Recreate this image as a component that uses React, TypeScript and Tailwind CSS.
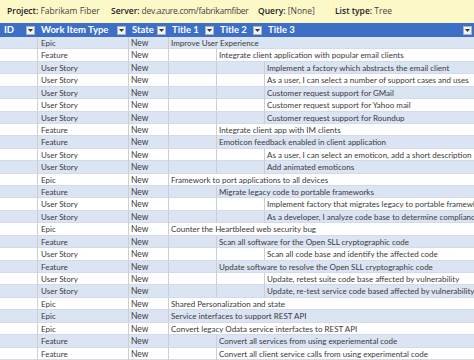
const rows: [string, string][] = [
  ['Epic', 'Improve User Experience'],
  ['Feature', 'Integrate client application with popular email clients'],
  ['User Story', 'Implement a factory which abstracts the email client'],
  ['User Story', 'As a user, I can select a number of support cases and uses'],
  ['User Story', 'Customer request support for GMail'],
  ['User Story', 'Customer request support for Yahoo mail'],
  ['User Story', 'Customer request support for Roundup'],
  ['Feature', 'Integrate client app with IM clients'],
  ['Feature', 'Emoticon feedback enabled in client application'],
  ['User Story', 'As a user, I can select an emoticon, add a short description'],
  ['User Story', 'Add animated emoticons'],
  ['Epic', 'Framework to port applications to all devices'],
  ['Feature', 'Migrate legacy code to portable frameworks'],
  ['User Story', 'Implement factory that migrates legacy to portable framewk'],
  ['User Story', 'As a developer, I analyze code base to determine compliance'],
  ['Epic', 'Counter the Heartbleed web security bug'],
  ['Feature', 'Scan all software for the Open SLL cryptographic code'],
  ['User Story', 'Scan all code base and identify the affected code'],
  ['Feature', 'Update software to resolve the Open SLL cryptographic code'],
  ['User Story', 'Update, retest suite code base affected by vulnerability'],
  ['User Story', 'Update, re-test service code based affected by vulnerability'],
  ['Epic', 'Shared Personalization and state'],
  ['Epic', 'Service interfaces to support REST API'],
  ['Epic', 'Convert legacy Odata service interfactes to REST API'],
  ['Feature', 'Convert all services from using experiemental code'],
  ['Feature', 'Convert all client service calls from using experimental code'],
];

const headers = ['ID', 'Work Item Type', 'State', 'Title 1', 'Title 2', 'Title 3'];

function Filter() {
  return (
    <span className="flex h-[9px] w-[9px] shrink-0 items-center justify-center border border-[#a9b4c4] bg-[#f4f4f4]">
      <svg width="5" height="3" viewBox="0 0 5 3">
        <path d="M0 0h5L2.5 3z" fill="#333" />
      </svg>
    </span>
  );
}

export default function App() {
  return (
    <div className="h-[360px] w-[474px] overflow-hidden bg-white font-['Lato',sans-serif]">
      <div className="flex h-[23px] items-center whitespace-nowrap bg-[#fcf8c8] pl-[7px] text-[8.5px] text-[#444] font-['Open_Sans',sans-serif]">
        <span className="w-[104px]"><b className="font-semibold text-[#222]">Project:</b> Fabrikam Fiber</span>
        <span className="w-[147px] tracking-[-0.3px]"><b className="font-semibold tracking-normal text-[#222]">Server:</b> dev.azure.com/fabrikamfiber</span>
        <span className="w-[77px]"><b className="font-semibold text-[#222]">Query:</b> [None]</span>
        <span><b className="font-semibold text-[#222]">List type:</b> Tree</span>
      </div>
      <div className="grid h-[14px] grid-cols-[37px_91px_40px_48px_48px_1fr] bg-[#3e6fc7] text-[9.5px] font-bold text-white">
        {headers.map((h) => (
          <div key={h} className="flex items-center justify-between pl-[4px] pr-[2px]">
            <span>{h}</span>
            <Filter />
          </div>
        ))}
      </div>
      {rows.map(([type, title], i) => {
        const start = type === 'Epic' ? 4 : type === 'Feature' ? 5 : 6;
        return (
          <div
            key={i}
            className={`grid h-[12.43px] grid-cols-[37px_91px_40px_48px_48px_1fr] border-b border-[#d3dbe8] text-[8px] leading-[12px] text-[#3a3a3a] ${i % 2 === 0 ? 'bg-[#dbe4f3]' : 'bg-white'}`}
          >
            <div />
            <div className="border-l border-[#c8cfd9] pl-[3px]">{type}</div>
            <div className="border-l border-[#c8cfd9] pl-[2px] text-[8.5px]">New</div>
            {start > 4 && <div className="border-l border-[#c8cfd9]" />}
            {start > 5 && <div className="border-l border-[#c8cfd9]" />}
            <div
              className={`overflow-hidden whitespace-nowrap border-l border-[#c8cfd9] pl-[2px] ${start === 4 ? 'col-span-3' : start === 5 ? 'col-span-2' : ''}`}
            >
              {title}
            </div>
          </div>
        );
      })}
    </div>
  );
}
